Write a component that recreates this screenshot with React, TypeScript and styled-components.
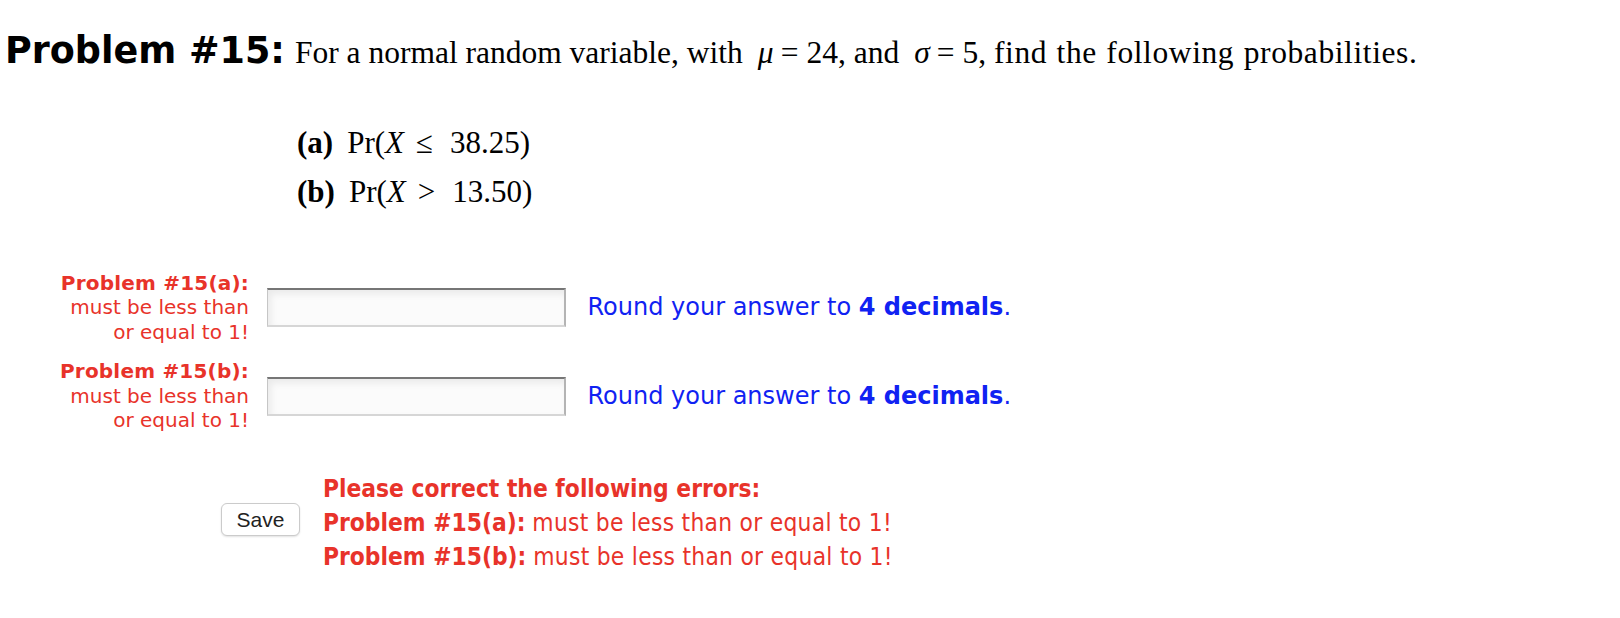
import React from 'react';
import styled, { createGlobalStyle } from 'styled-components';

const colors = {
  red: '#e8332a',
  blue: '#1022f2',
  black: '#000000',
};

const GlobalStyle = createGlobalStyle`
  html, body {
    margin: 0;
    padding: 0;
    background: #ffffff;
  }
  body {
    width: 1620px;
    height: 618px;
    overflow: hidden;
  }
`;

const Page = styled.div`
  padding-top: 28.5px;
  font-family: "DejaVu Sans", Verdana, sans-serif;
  color: ${colors.black};
`;

const Header = styled.div`
  display: flex;
  align-items: baseline;
  gap: 10px;
  margin-left: 5px;
`;

const Title = styled.h1`
  margin: 0;
  font-size: 36.5px;
  font-weight: bold;
  line-height: normal;
  white-space: nowrap;
`;

const Statement = styled.p`
  margin: 0;
  font-family: "Liberation Serif", "Times New Roman", serif;
  font-size: 31.5px;
  white-space: nowrap;
`;

const MathVar = styled.i`
  margin-left: 15px;
`;

const Eq = styled.span`
  margin: 0 8px 0 7px;
`;

const Tail = styled.span`
  letter-spacing: 0.6px;
  word-spacing: 1px;
`;

const Parts = styled.div`
  margin: 46.5px 0 0 297px;
  font-family: "Liberation Serif", "Times New Roman", serif;
  font-size: 31px;
  line-height: 49px;
`;

const Part = styled.div`
  white-space: nowrap;
`;

const PartTag = styled.b`
  margin-right: 14px;
`;

const Rel = styled.span`
  margin: 0 17px 0 12px;
`;

const Form = styled.div`
  display: flex;
  flex-direction: column;
  gap: 15.3px;
  margin-top: 54.6px;
`;

const Row = styled.div`
  display: flex;
  align-items: center;
`;

const LabelCell = styled.div`
  width: 249px;
  display: flex;
  justify-content: flex-end;
  flex: none;
`;

const LabelText = styled.div`
  width: 192px;
  text-align: right;
  color: ${colors.red};
  font-size: 20px;
  line-height: 24.5px;

  b {
    display: block;
    letter-spacing: 0.2px;
  }
`;

const AnswerBox = styled.input`
  box-sizing: border-box;
  width: 299px;
  height: 39px;
  margin-left: 17.5px;
  flex: none;
  border: 1px solid #c6c6c6;
  border-top: 2px solid #767676;
  border-right: 2px solid #b4b4b4;
  border-bottom: 2px solid #d6d6d6;
  background: #fbfbfb;
  box-shadow: inset 3px 4px 7px rgba(0, 0, 0, 0.07);
  outline: none;
`;

const Hint = styled.div`
  margin-left: 22px;
  color: ${colors.blue};
  font-size: 24px;
  white-space: nowrap;
`;

const ErrorSection = styled.div`
  display: flex;
  margin-top: 39.2px;
`;

const SaveCell = styled.div`
  width: 300px;
  flex: none;
  display: flex;
  justify-content: flex-end;
  align-items: flex-start;
  padding-top: 31px;
`;

const SaveButton = styled.button`
  box-sizing: border-box;
  width: 79px;
  height: 33px;
  padding: 0;
  background: #ffffff;
  border: 1px solid #cbcbcb;
  border-radius: 6px;
  box-shadow: 0 1px 2px rgba(0, 0, 0, 0.12);
  font-family: "Liberation Sans", Arial, sans-serif;
  font-size: 21px;
  color: #222222;
`;

const Messages = styled.div`
  margin-left: 23px;
  color: ${colors.red};
  font-family: "DejaVu Sans Condensed", "DejaVu Sans", sans-serif;
  font-stretch: condensed;
  font-size: 24.3px;
  line-height: 34px;
  white-space: nowrap;
`;

const MessageText = styled.span`
  letter-spacing: 0.28px;
`;

const parts = [
  { tag: '(a)', rel: '≤', value: '38.25' },
  { tag: '(b)', rel: '>', value: '13.50' },
];

const answers = ['a', 'b'];

const App: React.FC = () => {
  return (
    <Page>
      <GlobalStyle />
      <Header>
        <Title>Problem #15:</Title>
        <Statement>
          For a normal random variable, with<MathVar>μ</MathVar>
          <Eq>=</Eq>24, and<MathVar>σ</MathVar>
          <Eq>=</Eq>5, <Tail>find the following probabilities.</Tail>
        </Statement>
      </Header>

      <Parts>
        {parts.map((p) => (
          <Part key={p.tag}>
            <PartTag>{p.tag}</PartTag>Pr(<i>X</i>
            <Rel>{p.rel}</Rel>
            {p.value})
          </Part>
        ))}
      </Parts>

      <Form>
        {answers.map((a) => (
          <Row key={a}>
            <LabelCell>
              <LabelText>
                <b>Problem #15({a}):</b>
                must be less than or equal to 1!
              </LabelText>
            </LabelCell>
            <AnswerBox type="text" />
            <Hint>
              Round your answer to <b>4 decimals</b>.
            </Hint>
          </Row>
        ))}
      </Form>

      <ErrorSection>
        <SaveCell>
          <SaveButton type="button">Save</SaveButton>
        </SaveCell>
        <Messages>
          <div>
            <b>Please correct the following errors:</b>
          </div>
          {answers.map((a) => (
            <div key={a}>
              <b>Problem #15({a}):</b>{' '}
              <MessageText>must be less than or equal to 1!</MessageText>
            </div>
          ))}
        </Messages>
      </ErrorSection>
    </Page>
  );
};

export default App;
